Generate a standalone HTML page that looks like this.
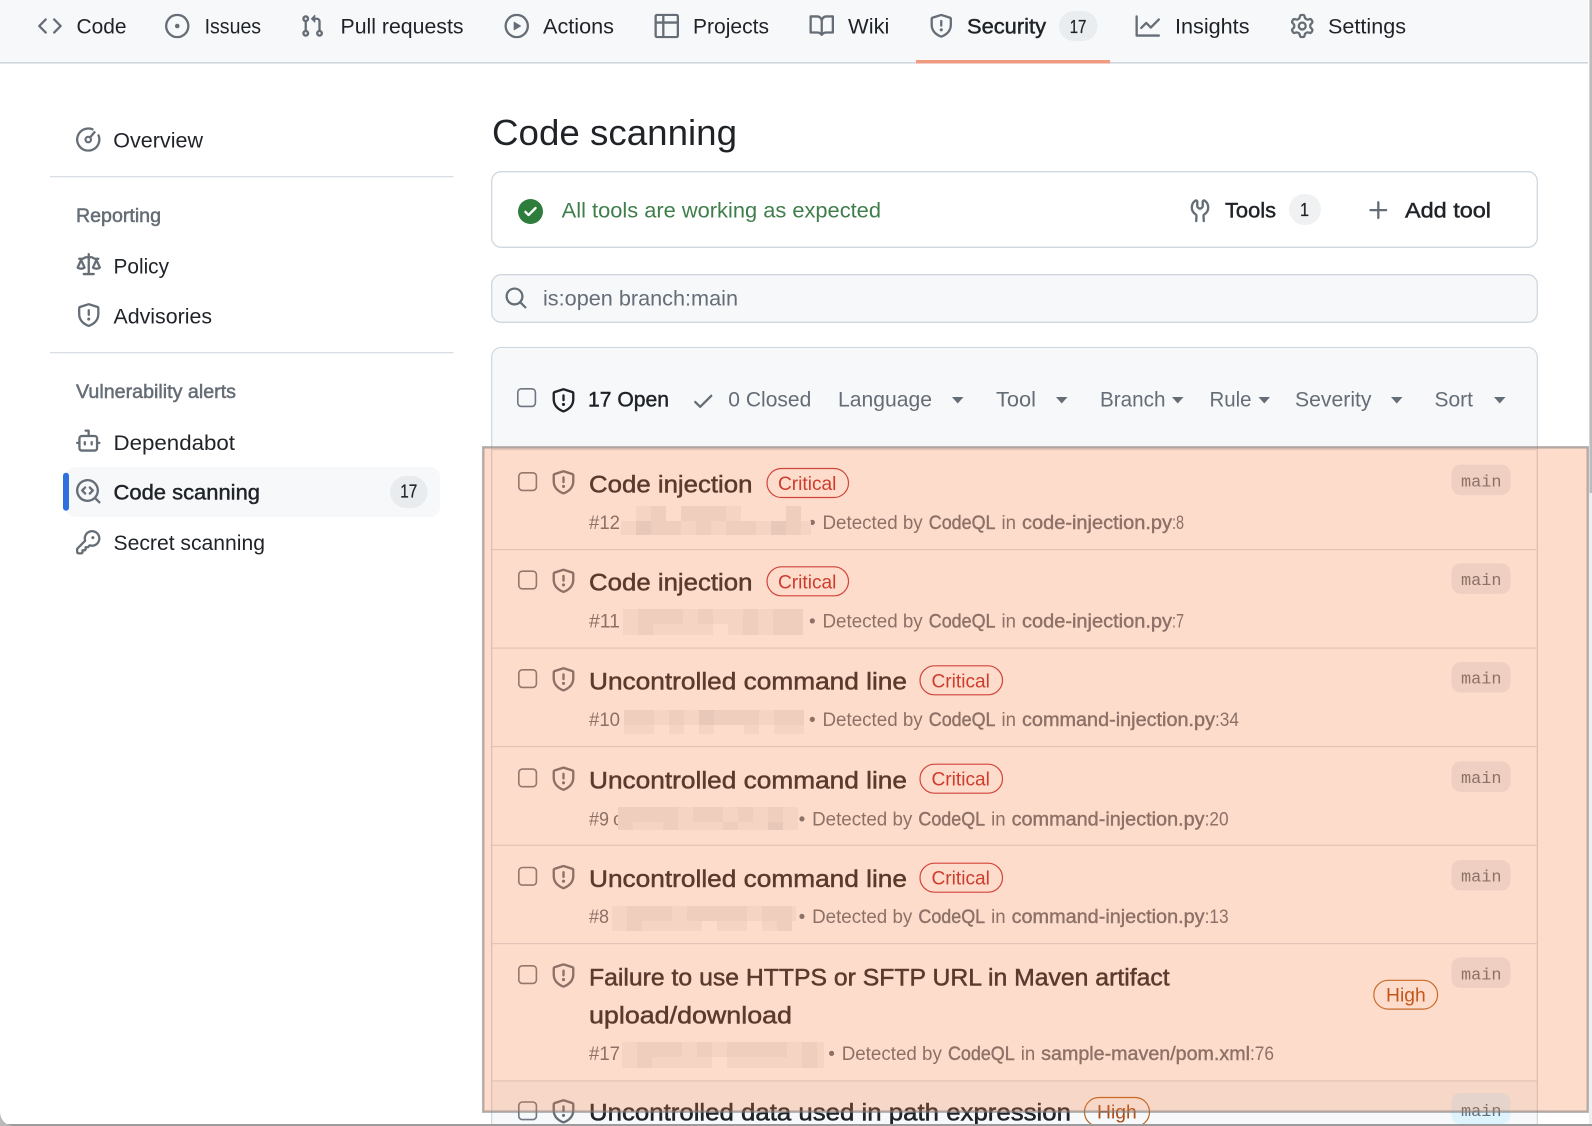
<!DOCTYPE html>
<html lang="en">
<head>
<meta charset="utf-8">
<title>Code scanning</title>
<style>
html,body{margin:0;padding:0;background:#fff;width:1592px;height:1126px;overflow:hidden}
svg{display:block;font-family:"Liberation Sans",sans-serif}
text{fill:#1f2328;font-size:21px}
.g{fill:#656d76}
.s{stroke:#1f2328;stroke-width:.45px}
.sg{fill:#656d76;stroke:#656d76;stroke-width:.5px;font-size:19.5px}
.t{font-size:24.5px;stroke:#1f2328;stroke-width:.5px}
.m{font-size:19px;fill:#656d76}
.mb{font-size:19px;fill:#656d76;stroke:#656d76;stroke-width:.4px}
.c{font-size:19.5px;fill:#bc2528}
.h{font-size:19.5px;fill:#af4a10}
.mono{font-family:"Liberation Mono",monospace;font-size:17px;fill:#656d76}
.n{font-size:18px;stroke:#1f2328;stroke-width:.3px}
.ic{fill:#656d76}
.cb{fill:none;stroke:#6e7781;stroke-width:1.6}
.bc{fill:none;stroke:#c1313b;stroke-width:1.2}
.bh{fill:none;stroke:#b66424;stroke-width:1.2}
.pill{fill:#eaeef2}
.l1{fill:#f6d4c4}.l2{fill:#efcebe}.l3{fill:#e8c8b8}
</style>
</head>
<body>
<svg xmlns="http://www.w3.org/2000/svg" width="1592" height="1126" viewBox="0 0 1592 1126">
<defs>
<symbol id="code" viewBox="0 0 16 16"><path d="m11.28 3.22 4.25 4.25a.75.75 0 0 1 0 1.06l-4.25 4.25a.749.749 0 0 1-1.275-.326.749.749 0 0 1 .215-.734L13.94 8l-3.72-3.72a.749.749 0 0 1 .326-1.275.749.749 0 0 1 .734.215Zm-6.56 0a.751.751 0 0 1 1.042.018.751.751 0 0 1 .018 1.042L2.06 8l3.72 3.72a.749.749 0 0 1-.326 1.275.749.749 0 0 1-.734-.215L.47 8.53a.75.75 0 0 1 0-1.06Z"/></symbol>
<symbol id="issue" viewBox="0 0 16 16"><path d="M8 9.5a1.5 1.5 0 1 0 0-3 1.5 1.5 0 0 0 0 3Z"/><path d="M8 0a8 8 0 1 1 0 16A8 8 0 0 1 8 0ZM1.5 8a6.5 6.5 0 1 0 13 0 6.5 6.5 0 0 0-13 0Z"/></symbol>
<symbol id="pr" viewBox="0 0 16 16"><path d="M1.5 3.25a2.25 2.25 0 1 1 3 2.122v5.256a2.251 2.251 0 1 1-1.5 0V5.372A2.25 2.25 0 0 1 1.5 3.25Zm5.677-.177L9.573.677A.25.25 0 0 1 10 .854V2.5h1A2.5 2.5 0 0 1 13.5 5v5.628a2.251 2.251 0 1 1-1.5 0V5a1 1 0 0 0-1-1h-1v1.646a.25.25 0 0 1-.427.177L7.177 3.427a.25.25 0 0 1 0-.354ZM3.75 2.5a.75.75 0 1 0 0 1.5.75.75 0 0 0 0-1.5Zm0 9.5a.75.75 0 1 0 0 1.5.75.75 0 0 0 0-1.5Zm8.25.75a.75.75 0 1 0 1.5 0 .75.75 0 0 0-1.5 0Z"/></symbol>
<symbol id="play" viewBox="0 0 16 16"><path d="M8 0a8 8 0 1 1 0 16A8 8 0 0 1 8 0ZM1.5 8a6.5 6.5 0 1 0 13 0 6.5 6.5 0 0 0-13 0Zm4.879-2.773 4.264 2.559a.25.25 0 0 1 0 .428l-4.264 2.559A.25.25 0 0 1 6 10.559V5.442a.25.25 0 0 1 .379-.215Z"/></symbol>
<symbol id="table" viewBox="0 0 16 16"><path d="M0 1.75C0 .784.784 0 1.75 0h12.5C15.216 0 16 .784 16 1.75v12.5A1.75 1.75 0 0 1 14.25 16H1.75A1.75 1.75 0 0 1 0 14.25ZM6.5 6.5v8h7.75a.25.25 0 0 0 .25-.25V6.5Zm8-1.5V1.75a.25.25 0 0 0-.25-.25H6.5V5Zm-13 1.5v7.75c0 .138.112.25.25.25H5v-8ZM5 5V1.5H1.75a.25.25 0 0 0-.25.25V5Z"/></symbol>
<symbol id="book" viewBox="0 0 16 16"><path d="M0 1.75A.75.75 0 0 1 .75 1h4.253c1.227 0 2.317.59 3 1.501A3.743 3.743 0 0 1 11.006 1h4.245a.75.75 0 0 1 .75.75v10.5a.75.75 0 0 1-.75.75h-4.507a2.25 2.25 0 0 0-1.591.659l-.622.621a.75.75 0 0 1-1.06 0l-.622-.621A2.25 2.25 0 0 0 5.258 13H.75a.75.75 0 0 1-.75-.75Zm7.251 10.324.004-5.073-.002-2.253A2.25 2.25 0 0 0 5.003 2.5H1.5v9h3.757a3.75 3.75 0 0 1 1.994.574ZM8.755 4.75l-.004 7.322a3.752 3.752 0 0 1 1.992-.572H14.5v-9h-3.495a2.25 2.25 0 0 0-2.25 2.25Z"/></symbol>
<symbol id="shield" viewBox="0 0 16 16"><path d="M7.467.133a1.748 1.748 0 0 1 1.066 0l5.25 1.68A1.75 1.75 0 0 1 15 3.48V7c0 1.566-.32 3.182-1.303 4.682-.983 1.498-2.585 2.813-5.032 3.855a1.697 1.697 0 0 1-1.33 0c-2.447-1.042-4.049-2.357-5.032-3.855C1.32 10.182 1 8.566 1 7V3.48a1.75 1.75 0 0 1 1.217-1.667Zm.61 1.429a.25.25 0 0 0-.153 0l-5.25 1.68a.25.25 0 0 0-.174.238V7c0 1.358.275 2.666 1.057 3.86.784 1.194 2.121 2.34 4.366 3.297a.196.196 0 0 0 .154 0c2.245-.956 3.582-2.104 4.366-3.298C13.225 9.666 13.5 8.36 13.5 7V3.48a.251.251 0 0 0-.174-.237l-5.25-1.68ZM8.75 4.75v3a.75.75 0 0 1-1.5 0v-3a.75.75 0 0 1 1.5 0ZM9 10.5a1 1 0 1 1-2 0 1 1 0 0 1 2 0Z"/></symbol>
<symbol id="graph" viewBox="0 0 16 16"><path d="M1.5 1.75V13.5h13.75a.75.75 0 0 1 0 1.5H.75a.75.75 0 0 1-.75-.75V1.75a.75.75 0 0 1 1.5 0Zm14.28 2.53-5.25 5.25a.75.75 0 0 1-1.06 0L7 7.06 4.28 9.78a.751.751 0 0 1-1.042-.018.751.751 0 0 1-.018-1.042l3.25-3.25a.75.75 0 0 1 1.06 0L10 7.94l4.72-4.72a.751.751 0 0 1 1.042.018.751.751 0 0 1 .018 1.042Z"/></symbol>
<symbol id="gear" viewBox="0 0 16 16"><path d="M8 0a8.2 8.2 0 0 1 .701.031C9.444.095 9.99.645 10.16 1.29l.288 1.107c.018.066.079.158.212.224.231.114.454.243.668.386.123.082.233.09.299.071l1.103-.303c.644-.176 1.392.021 1.82.63.27.385.506.792.704 1.218.315.675.111 1.422-.364 1.891l-.814.806c-.049.048-.098.147-.088.294.016.257.016.515 0 .772-.01.147.038.246.088.294l.814.806c.475.469.679 1.216.364 1.891a7.977 7.977 0 0 1-.704 1.217c-.428.61-1.176.807-1.82.63l-1.102-.302c-.067-.019-.177-.011-.3.071a5.909 5.909 0 0 1-.668.386c-.133.066-.194.158-.211.224l-.29 1.106c-.168.646-.715 1.196-1.458 1.26a8.006 8.006 0 0 1-1.402 0c-.743-.064-1.289-.614-1.458-1.26l-.289-1.106c-.018-.066-.079-.158-.212-.224a5.738 5.738 0 0 1-.668-.386c-.123-.082-.233-.09-.299-.071l-1.103.303c-.644.176-1.392-.021-1.82-.63a8.12 8.12 0 0 1-.704-1.218c-.315-.675-.111-1.422.363-1.891l.815-.806c.05-.048.098-.147.088-.294a6.214 6.214 0 0 1 0-.772c.01-.147-.038-.246-.088-.294l-.815-.806C.635 6.045.431 5.298.746 4.623a7.92 7.92 0 0 1 .704-1.217c.428-.61 1.176-.807 1.82-.63l1.102.302c.067.019.177.011.3-.071.214-.143.437-.272.668-.386.133-.066.194-.158.211-.224l.29-1.106C6.009.645 6.556.095 7.299.03 7.53.01 7.764 0 8 0Zm-.571 1.525c-.036.003-.108.036-.137.146l-.289 1.105c-.147.561-.549.967-.998 1.189-.173.086-.34.183-.5.29-.417.278-.97.423-1.529.27l-1.103-.303c-.109-.03-.175.016-.195.045-.22.312-.412.644-.573.99-.014.031-.021.11.059.19l.815.806c.411.406.562.957.53 1.456a4.709 4.709 0 0 0 0 .582c.032.499-.119 1.05-.53 1.456l-.815.806c-.081.08-.073.159-.059.19.162.346.353.677.573.989.02.03.085.076.195.046l1.102-.303c.56-.153 1.113-.008 1.53.27.161.107.328.204.501.29.447.222.85.629.997 1.189l.289 1.105c.029.109.101.143.137.146a6.6 6.6 0 0 0 1.142 0c.036-.003.108-.036.137-.146l.289-1.105c.147-.561.549-.967.998-1.189.173-.086.34-.183.5-.29.417-.278.97-.423 1.529-.27l1.103.303c.109.029.175-.016.195-.045.22-.313.411-.644.573-.99.014-.031.021-.11-.059-.19l-.815-.806c-.411-.406-.562-.957-.53-1.456a4.709 4.709 0 0 0 0-.582c-.032-.499.119-1.05.53-1.456l.815-.806c.081-.08.073-.159.059-.19a6.464 6.464 0 0 0-.573-.989c-.02-.03-.085-.076-.195-.046l-1.102.303c-.56.153-1.113.008-1.53-.27a4.44 4.44 0 0 0-.501-.29c-.447-.222-.85-.629-.997-1.189l-.289-1.105c-.029-.11-.101-.143-.137-.146a6.6 6.6 0 0 0-1.142 0ZM11 8a3 3 0 1 1-6 0 3 3 0 0 1 6 0ZM9.5 8a1.5 1.5 0 1 0-3.001.001A1.5 1.5 0 0 0 9.5 8Z"/></symbol>
<symbol id="meter" viewBox="0 0 16 16"><path d="M8 1.5a6.5 6.5 0 1 0 6.016 4.035.75.75 0 0 1 1.388-.57 8 8 0 1 1-4.37-4.37.75.75 0 0 1-.569 1.388A6.479 6.479 0 0 0 8 1.5Z"/><path d="M8 5.5a2.5 2.5 0 1 1 0 5 2.5 2.5 0 0 1 0-5Zm0 1.4a1.1 1.1 0 1 0 0 2.2 1.1 1.1 0 0 0 0-2.2Z"/><path d="M11.9 2.2l1.15 1-3.1 3.7-1.15-1z"/></symbol>
<symbol id="law" viewBox="0 0 16 16"><path d="M8.75.75V2h.985c.304 0 .603.08.867.231l1.29.736c.038.022.08.033.124.033h2.234a.75.75 0 0 1 0 1.5h-.427l2.111 4.692a.75.75 0 0 1-.154.838l-.53-.53.529.531-.001.002-.002.002-.006.006-.006.005-.01.01-.045.04c-.21.176-.441.327-.686.45C14.556 10.78 13.88 11 13 11a4.498 4.498 0 0 1-2.023-.454 3.544 3.544 0 0 1-.686-.45l-.045-.04-.016-.015-.006-.006-.004-.004v-.001a.75.75 0 0 1-.154-.838L12.178 4.5h-.162c-.305 0-.604-.079-.868-.231l-1.29-.736a.245.245 0 0 0-.124-.033H8.75V13h2.5a.75.75 0 0 1 0 1.5h-6.5a.75.75 0 0 1 0-1.5h2.5V3.5h-.984a.245.245 0 0 0-.124.033l-1.289.737c-.265.15-.564.23-.869.23h-.162l2.112 4.692a.75.75 0 0 1-.154.838l-.53-.53.529.531-.001.002-.002.002-.006.006-.016.015-.045.04c-.21.176-.441.327-.686.45C4.556 10.78 3.88 11 3 11a4.498 4.498 0 0 1-2.023-.454 3.544 3.544 0 0 1-.686-.45l-.045-.04-.016-.015-.006-.006-.004-.004v-.001a.75.75 0 0 1-.154-.838L2.178 4.5H1.75a.75.75 0 0 1 0-1.5h2.234a.249.249 0 0 0 .125-.033l1.288-.737c.265-.15.564-.23.869-.23h.984V.75a.75.75 0 0 1 1.5 0Zm2.945 8.477c.285.135.718.273 1.305.273s1.02-.138 1.305-.273L13 6.327Zm-10 0c.285.135.718.273 1.305.273s1.02-.138 1.305-.273L3 6.327Z"/></symbol>
<symbol id="dep" viewBox="0 0 16 16"><path d="M5.75 7.5a.75.75 0 0 1 .75.75v1.5a.75.75 0 0 1-1.5 0v-1.5a.75.75 0 0 1 .75-.75Zm5.25.75a.75.75 0 0 0-1.5 0v1.5a.75.75 0 0 0 1.5 0v-1.5Z"/><path d="M6.25 0h2A.75.75 0 0 1 9 .75V3.5h3.25a2.25 2.25 0 0 1 2.25 2.25V8h.75a.75.75 0 0 1 0 1.5h-.75v2.75a2.25 2.25 0 0 1-2.25 2.25h-8.5a2.25 2.25 0 0 1-2.25-2.25V9.5H.75a.75.75 0 0 1 0-1.5h.75V5.75A2.25 2.25 0 0 1 3.75 3.5H7.5v-2H6.25a.75.75 0 0 1 0-1.5ZM3 5.75v6.5c0 .414.336.75.75.75h8.5a.75.75 0 0 0 .75-.75v-6.5a.75.75 0 0 0-.75-.75h-8.5a.75.75 0 0 0-.75.75Z"/></symbol>
<symbol id="scan" viewBox="0 0 16 16"><path d="M8.47 4.97a.75.75 0 0 0 0 1.06L9.94 7.5 8.47 8.97a.75.75 0 1 0 1.06 1.06l2-2a.75.75 0 0 0 0-1.06l-2-2a.75.75 0 0 0-1.06 0ZM6.53 6.03a.75.75 0 0 0-1.06-1.06l-2 2a.75.75 0 0 0 0 1.06l2 2a.75.75 0 1 0 1.06-1.06L5.06 7.5l1.47-1.47Z"/><path d="M12.246 13.307a7.501 7.501 0 1 1 1.06-1.06l2.474 2.473a.749.749 0 0 1-.326 1.275.749.749 0 0 1-.734-.215ZM1.5 7.5a6.002 6.002 0 0 0 3.608 5.504 6.002 6.002 0 0 0 6.486-1.117.748.748 0 0 1 .292-.293A6 6 0 1 0 1.5 7.5Z"/></symbol>
<symbol id="key" viewBox="0 0 16 16"><path d="M10.5 0a5.499 5.499 0 1 1-1.288 10.848l-.932.932a.749.749 0 0 1-.53.22H7v.75a.749.749 0 0 1-.22.53l-.5.5a.749.749 0 0 1-.53.22H5v.75a.749.749 0 0 1-.22.53l-.5.5a.749.749 0 0 1-.53.22h-2A1.75 1.75 0 0 1 0 14.25v-2c0-.199.079-.389.22-.53l4.932-4.932A5.5 5.5 0 0 1 10.5 0Zm-4 5.5c-.001.431.069.86.205 1.269a.75.75 0 0 1-.181.768L1.5 12.56v1.69c0 .138.112.25.25.25h1.69l.06-.06v-1.19a.75.75 0 0 1 .75-.75h1.19l.06-.06v-1.19a.75.75 0 0 1 .75-.75h1.19l1.023-1.025a.75.75 0 0 1 .768-.18A4 4 0 1 0 6.5 5.5ZM11 6a1 1 0 1 1 0-2 1 1 0 0 1 0 2Z"/></symbol>
<symbol id="okc" viewBox="0 0 16 16"><path d="M8 16A8 8 0 1 1 8 0a8 8 0 0 1 0 16Zm3.78-9.72a.751.751 0 0 0-.018-1.042.751.751 0 0 0-1.042-.018L6.75 9.19 5.28 7.72a.751.751 0 0 0-1.042.018.751.751 0 0 0-.018 1.042l2 2a.75.75 0 0 0 1.06 0Z"/></symbol>
<symbol id="tools" viewBox="0 0 16 16"><path d="M5.433 2.304A4.492 4.492 0 0 0 3.5 6c0 1.598.832 3.002 2.09 3.802.518.328.929.923.902 1.64v.008l-.164 3.337a.75.75 0 1 1-1.498-.073l.163-3.33c.002-.085-.05-.216-.207-.316A5.996 5.996 0 0 1 2 6a5.993 5.993 0 0 1 2.567-4.92 1.482 1.482 0 0 1 1.673-.04c.462.296.76.827.76 1.423v2.82c0 .082.041.16.11.206l.75.51a.25.25 0 0 0 .28 0l.75-.51A.249.249 0 0 0 9 5.282V2.463c0-.596.298-1.127.76-1.423a1.482 1.482 0 0 1 1.673.04A5.993 5.993 0 0 1 14 6a5.996 5.996 0 0 1-2.786 5.068c-.157.1-.209.23-.207.315l.163 3.33a.752.752 0 0 1-1.094.714.75.75 0 0 1-.404-.64l-.164-3.345c-.027-.717.384-1.312.902-1.64A4.495 4.495 0 0 0 12.5 6a4.492 4.492 0 0 0-1.933-3.696c-.024-.017-.067-.067-.067.16v2.818a1.75 1.75 0 0 1-.767 1.448l-.75.51a1.75 1.75 0 0 1-1.966 0l-.75-.51A1.75 1.75 0 0 1 5.5 5.282V2.463c0-.226-.043-.176-.067-.159Z"/></symbol>
<symbol id="plus" viewBox="0 0 16 16"><path d="M7.75 2a.75.75 0 0 1 .75.75V7h4.25a.75.75 0 0 1 0 1.5H8.5v4.25a.75.75 0 0 1-1.5 0V8.5H2.75a.75.75 0 0 1 0-1.5H7V2.75A.75.75 0 0 1 7.75 2Z"/></symbol>
<symbol id="search" viewBox="0 0 16 16"><path d="M10.68 11.74a6 6 0 0 1-7.922-8.982 6 6 0 0 1 8.982 7.922l3.04 3.04a.749.749 0 0 1-.326 1.275.749.749 0 0 1-.734-.215ZM11.5 7a4.499 4.499 0 1 0-8.997 0A4.499 4.499 0 0 0 11.5 7Z"/></symbol>
<symbol id="check" viewBox="0 0 16 16"><path d="M13.78 4.22a.75.75 0 0 1 0 1.06l-7.25 7.25a.75.75 0 0 1-1.06 0L2.22 9.28a.751.751 0 0 1 .018-1.042.751.751 0 0 1 1.042-.018L6 10.94l6.72-6.72a.75.75 0 0 1 1.06 0Z"/></symbol>
</defs>

<!-- top nav -->
<rect x="0" y="0" width="1588" height="62" fill="#f6f8fa"/>
<rect x="0" y="62" width="1588" height="1.6" fill="#d0d7de"/>
<rect x="916" y="60" width="194" height="3.4" fill="#f09a80"/>
<g class="ic">
<use href="#code" x="37.7" y="13.75" width="24.5" height="24.5"/>
<use href="#issue" x="165" y="13.75" width="24.5" height="24.5"/>
<use href="#pr" x="300" y="13.75" width="24.5" height="24.5"/>
<use href="#play" x="504.5" y="13.75" width="24.5" height="24.5"/>
<use href="#table" x="654.5" y="13.75" width="24.5" height="24.5"/>
<use href="#book" x="809.5" y="13.75" width="24.5" height="24.5"/>
<use href="#shield" x="929" y="13.75" width="24.5" height="24.5"/>
<use href="#graph" x="1135.5" y="13.75" width="24.5" height="24.5"/>
<use href="#gear" x="1290" y="13.75" width="24.5" height="24.5"/>
</g>
<text x="76.5" y="33.7" textLength="50" lengthAdjust="spacingAndGlyphs">Code</text>
<text x="204.6" y="33.7" textLength="56.5" lengthAdjust="spacingAndGlyphs">Issues</text>
<text x="340.5" y="33.7" textLength="123" lengthAdjust="spacingAndGlyphs">Pull requests</text>
<text x="543" y="33.7" textLength="71" lengthAdjust="spacingAndGlyphs">Actions</text>
<text x="693" y="33.7" textLength="76" lengthAdjust="spacingAndGlyphs">Projects</text>
<text x="848" y="33.7" textLength="41.4" lengthAdjust="spacingAndGlyphs">Wiki</text>
<text x="967" y="33.7" textLength="79" lengthAdjust="spacingAndGlyphs" class="s">Security</text>
<rect x="1059" y="11" width="38.5" height="30" rx="15" fill="#eaedf0"/>
<text x="1069.7" y="33" textLength="16.7" lengthAdjust="spacingAndGlyphs" class="n" style="font-kerning:none">17</text>
<text x="1175" y="33.7" textLength="74.5" lengthAdjust="spacingAndGlyphs">Insights</text>
<text x="1328" y="33.7" textLength="78" lengthAdjust="spacingAndGlyphs">Settings</text>

<!-- sidebar -->
<g class="ic">
<use href="#meter" x="76" y="127.3" width="24.5" height="24.5"/>
<use href="#law" x="76.5" y="253" width="24.5" height="24.5"/>
<use href="#shield" x="76.5" y="303" width="24.5" height="24.5"/>
<use href="#dep" x="76" y="429.5" width="24.5" height="24.5"/>
<use href="#key" x="76" y="530" width="24.5" height="24.5"/>
</g>
<text x="113.3" y="147.7" textLength="89.7" lengthAdjust="spacingAndGlyphs">Overview</text>
<rect x="50" y="176" width="403.5" height="1.3" fill="#d8dee4"/>
<text x="76" y="222" textLength="85" lengthAdjust="spacingAndGlyphs" class="sg">Reporting</text>
<text x="113.5" y="273.3" textLength="55.5" lengthAdjust="spacingAndGlyphs">Policy</text>
<text x="113.5" y="323.5" textLength="98.5" lengthAdjust="spacingAndGlyphs">Advisories</text>
<rect x="50" y="352" width="403.5" height="1.3" fill="#d8dee4"/>
<text x="76" y="398" textLength="160" lengthAdjust="spacingAndGlyphs" class="sg">Vulnerability alerts</text>
<text x="113.5" y="450" textLength="121.5" lengthAdjust="spacingAndGlyphs">Dependabot</text>
<rect x="65" y="467" width="375" height="50" rx="10" fill="#f6f8fa"/>
<rect x="63" y="472.7" width="6" height="38" rx="3" fill="#2f6fde"/>
<use href="#scan" class="ic" x="76" y="479" width="24.5" height="24.5"/>
<text x="113.5" y="499.5" textLength="146.5" lengthAdjust="spacingAndGlyphs" class="s">Code scanning</text>
<rect x="390" y="476" width="37.5" height="32" rx="16" fill="#e9ecee"/>
<text x="400.3" y="497.5" textLength="17" lengthAdjust="spacingAndGlyphs" class="n" style="font-kerning:none">17</text>
<text x="113.5" y="550" textLength="151.5" lengthAdjust="spacingAndGlyphs">Secret scanning</text>

<!-- heading -->
<text x="492" y="145" textLength="245" lengthAdjust="spacingAndGlyphs" style="font-size:36px">Code scanning</text>

<!-- status box -->
<rect x="491.7" y="171.7" width="1045.6" height="75.6" rx="9.5" fill="#fff" stroke="#d0d7de" stroke-width="1.3"/>
<use href="#okc" x="518" y="199" width="25" height="25" fill="#2e7d3c"/>
<text x="561.7" y="217.5" textLength="319.3" lengthAdjust="spacingAndGlyphs" style="fill:#3f7d4b">All tools are working as expected</text>
<use href="#tools" class="ic" x="1187.5" y="198" width="25" height="25"/>
<text x="1225" y="217.5" textLength="51" lengthAdjust="spacingAndGlyphs" class="s">Tools</text>
<rect x="1289" y="194" width="32" height="31" rx="15.5" fill="#eff1f3"/>
<text x="1300" y="216" textLength="9" lengthAdjust="spacingAndGlyphs" class="n">1</text>
<use href="#plus" class="ic" x="1366.2" y="198" width="25" height="25"/>
<text x="1405" y="217.5" textLength="86" lengthAdjust="spacingAndGlyphs" class="s">Add tool</text>

<!-- search -->
<rect x="491.7" y="274.7" width="1045.6" height="47.6" rx="9.5" fill="#f6f8fa" stroke="#d0d7de" stroke-width="1.3"/>
<use href="#search" class="ic" x="504" y="286" width="24" height="24"/>
<text x="543" y="305.7" textLength="195" lengthAdjust="spacingAndGlyphs" class="g">is:open branch:main</text>

<!-- list -->
<path d="M491.7 1124V357a9.5 9.5 0 0 1 9.5-9.5h1026.6a9.5 9.5 0 0 1 9.5 9.5v767z" fill="#fff" stroke="#d0d7de" stroke-width="1.3"/>
<path d="M492.4 449V357a9 9 0 0 1 9-9h1026.2a9 9 0 0 1 9 9v92z" fill="#f6f8fa"/>
<rect x="492.4" y="1081" width="1044.2" height="43" fill="#f6f8fa"/>
<g fill="#d8dee4">
<rect x="492" y="449" width="1045" height="1.2"/>
<rect x="492" y="549" width="1045" height="1.2"/>
<rect x="492" y="647.5" width="1045" height="1.2"/>
<rect x="492" y="746" width="1045" height="1.2"/>
<rect x="492" y="844.7" width="1045" height="1.2"/>
<rect x="492" y="943" width="1045" height="1.2"/>
<rect x="492" y="1080.3" width="1045" height="1.2"/>
</g>

<!-- list header -->
<rect x="517.8" y="388.8" width="17.6" height="17.6" rx="3.5" class="cb"/>
<use href="#shield" x="551" y="388" width="25" height="25" fill="#1f2328"/>
<text x="588" y="406.7" textLength="81" lengthAdjust="spacingAndGlyphs" class="s">17 Open</text>
<use href="#check" class="ic" x="691" y="388.5" width="24.5" height="24.5"/>
<text x="728.3" y="406.7" textLength="83" lengthAdjust="spacingAndGlyphs" class="g">0 Closed</text>
<text x="838" y="406.7" textLength="94" lengthAdjust="spacingAndGlyphs" class="g">Language</text>
<text x="996" y="406.7" textLength="40" lengthAdjust="spacingAndGlyphs" class="g">Tool</text>
<text x="1100" y="406.7" textLength="65.5" lengthAdjust="spacingAndGlyphs" class="g">Branch</text>
<text x="1209.5" y="406.7" textLength="42" lengthAdjust="spacingAndGlyphs" class="g">Rule</text>
<text x="1295" y="406.7" textLength="76.5" lengthAdjust="spacingAndGlyphs" class="g">Severity</text>
<text x="1434.5" y="406.7" textLength="38.5" lengthAdjust="spacingAndGlyphs" class="g">Sort</text>
<g fill="#656d76">
<path d="M952 397h11.5l-5.75 6.5z"/>
<path d="M1056 397h11.5l-5.75 6.5z"/>
<path d="M1172 397h11.5l-5.75 6.5z"/>
<path d="M1258.5 397h11.5l-5.75 6.5z"/>
<path d="M1391 397h11.5l-5.75 6.5z"/>
<path d="M1494 397h11.5l-5.75 6.5z"/>
</g>

<!-- rows: checkboxes + shields -->
<g>
<rect x="518.8" y="472.8" width="17.6" height="17.6" rx="3.5" class="cb"/>
<rect x="518.8" y="571.2" width="17.6" height="17.6" rx="3.5" class="cb"/>
<rect x="518.8" y="669.8" width="17.6" height="17.6" rx="3.5" class="cb"/>
<rect x="518.8" y="769.1" width="17.6" height="17.6" rx="3.5" class="cb"/>
<rect x="518.8" y="867.5" width="17.6" height="17.6" rx="3.5" class="cb"/>
<rect x="518.8" y="965.8" width="17.6" height="17.6" rx="3.5" class="cb"/>
<rect x="518.8" y="1102" width="17.6" height="17.6" rx="3.5" class="cb"/>
</g>
<g class="ic">
<use href="#shield" x="551" y="470" width="25" height="25"/>
<use href="#shield" x="551" y="568.5" width="25" height="25"/>
<use href="#shield" x="551" y="667" width="25" height="25"/>
<use href="#shield" x="551" y="766.4" width="25" height="25"/>
<use href="#shield" x="551" y="864.8" width="25" height="25"/>
<use href="#shield" x="551" y="963.2" width="25" height="25"/>
<use href="#shield" x="551" y="1099" width="25" height="25"/>
</g>

<!-- titles -->
<text x="589" y="492.3" textLength="163.5" lengthAdjust="spacingAndGlyphs" class="t">Code injection</text>
<text x="589" y="590.7" textLength="163.5" lengthAdjust="spacingAndGlyphs" class="t">Code injection</text>
<text x="589" y="689.3" textLength="318" lengthAdjust="spacingAndGlyphs" class="t">Uncontrolled command line</text>
<text x="589" y="788.6" textLength="318" lengthAdjust="spacingAndGlyphs" class="t">Uncontrolled command line</text>
<text x="589" y="887" textLength="318" lengthAdjust="spacingAndGlyphs" class="t">Uncontrolled command line</text>
<text x="589" y="985.3" textLength="580.6" lengthAdjust="spacingAndGlyphs" class="t">Failure to use HTTPS or SFTP URL in Maven artifact</text>
<text x="589" y="1023.5" textLength="203" lengthAdjust="spacingAndGlyphs" class="t">upload/download</text>
<text x="589" y="1120.7" textLength="482" lengthAdjust="spacingAndGlyphs" class="t">Uncontrolled data used in path expression</text>

<!-- badges -->
<rect x="767" y="468.5" width="81.5" height="29" rx="14.5" class="bc"/>
<text x="778" y="490" textLength="58.4" lengthAdjust="spacingAndGlyphs" class="c">Critical</text>
<rect x="767" y="566.8" width="81.5" height="29" rx="14.5" class="bc"/>
<text x="778" y="588.3" textLength="58.4" lengthAdjust="spacingAndGlyphs" class="c">Critical</text>
<rect x="920" y="665.8" width="82.5" height="29" rx="14.5" class="bc"/>
<text x="931.5" y="687.3" textLength="58.4" lengthAdjust="spacingAndGlyphs" class="c">Critical</text>
<rect x="920" y="764.2" width="82.5" height="29" rx="14.5" class="bc"/>
<text x="931.5" y="785.7" textLength="58.4" lengthAdjust="spacingAndGlyphs" class="c">Critical</text>
<rect x="920" y="863.2" width="82.5" height="29" rx="14.5" class="bc"/>
<text x="931.5" y="884.7" textLength="58.4" lengthAdjust="spacingAndGlyphs" class="c">Critical</text>
<rect x="1373.8" y="980.3" width="63.8" height="28.8" rx="14.4" class="bh"/>
<text x="1386" y="1001.7" textLength="39.7" lengthAdjust="spacingAndGlyphs" class="h">High</text>
<rect x="1084.5" y="1097.5" width="65" height="29" rx="14.5" class="bh"/>
<text x="1097" y="1118.5" textLength="39.7" lengthAdjust="spacingAndGlyphs" class="h">High</text>

<!-- branch pills -->
<rect x="1451.5" y="464.6" width="59" height="30.5" rx="9" class="pill"/><text x="1461" y="486.3" textLength="40.5" lengthAdjust="spacingAndGlyphs" class="mono">main</text>
<rect x="1451.5" y="563.4" width="59" height="30.5" rx="9" class="pill"/><text x="1461" y="585" textLength="40.5" lengthAdjust="spacingAndGlyphs" class="mono">main</text>
<rect x="1451.5" y="662" width="59" height="30.5" rx="9" class="pill"/><text x="1461" y="683.5" textLength="40.5" lengthAdjust="spacingAndGlyphs" class="mono">main</text>
<rect x="1451.5" y="761.4" width="59" height="30.5" rx="9" class="pill"/><text x="1461" y="783" textLength="40.5" lengthAdjust="spacingAndGlyphs" class="mono">main</text>
<rect x="1451.5" y="860" width="59" height="30.5" rx="9" class="pill"/><text x="1461" y="881.5" textLength="40.5" lengthAdjust="spacingAndGlyphs" class="mono">main</text>
<rect x="1451.5" y="957.4" width="59" height="30.5" rx="9" class="pill"/><text x="1461" y="979.5" textLength="40.5" lengthAdjust="spacingAndGlyphs" class="mono">main</text>
<rect x="1451.5" y="1093" width="59" height="31" rx="9" fill="#ddf4ff"/><text x="1461" y="1116" textLength="40.5" lengthAdjust="spacingAndGlyphs" class="mono">main</text>

<!-- meta lines -->
<text x="589" y="529" textLength="31" lengthAdjust="spacingAndGlyphs" class="m">#12</text>
<text x="809" y="529" class="m">•</text><text x="822.5" y="529" textLength="100.2" lengthAdjust="spacingAndGlyphs" class="m">Detected by</text><text x="928.8" y="529" textLength="66.7" lengthAdjust="spacingAndGlyphs" class="mb">CodeQL</text><text x="1001.5" y="529" textLength="14.5" lengthAdjust="spacingAndGlyphs" class="m">in</text><text x="1022" y="529" textLength="150" lengthAdjust="spacingAndGlyphs" class="mb">code-injection.py</text><text x="1172" y="529" textLength="12" lengthAdjust="spacingAndGlyphs" class="m">:8</text>

<text x="589" y="627.4" textLength="31" lengthAdjust="spacingAndGlyphs" class="m">#11</text>
<text x="809" y="627.4" class="m">•</text><text x="822.5" y="627.4" textLength="100.2" lengthAdjust="spacingAndGlyphs" class="m">Detected by</text><text x="928.8" y="627.4" textLength="66.7" lengthAdjust="spacingAndGlyphs" class="mb">CodeQL</text><text x="1001.5" y="627.4" textLength="14.5" lengthAdjust="spacingAndGlyphs" class="m">in</text><text x="1022" y="627.4" textLength="150" lengthAdjust="spacingAndGlyphs" class="mb">code-injection.py</text><text x="1172" y="627.4" textLength="12" lengthAdjust="spacingAndGlyphs" class="m">:7</text>

<text x="589" y="726" textLength="31" lengthAdjust="spacingAndGlyphs" class="m">#10</text>
<text x="809" y="726" class="m">•</text><text x="822.5" y="726" textLength="100.2" lengthAdjust="spacingAndGlyphs" class="m">Detected by</text><text x="928.8" y="726" textLength="66.7" lengthAdjust="spacingAndGlyphs" class="mb">CodeQL</text><text x="1001.5" y="726" textLength="14.5" lengthAdjust="spacingAndGlyphs" class="m">in</text><text x="1022" y="726" textLength="193" lengthAdjust="spacingAndGlyphs" class="mb">command-injection.py</text><text x="1215" y="726" textLength="24" lengthAdjust="spacingAndGlyphs" class="m">:34</text>

<text x="589" y="825.3" textLength="20" lengthAdjust="spacingAndGlyphs" class="m">#9</text><text x="613" y="825.3" class="m">c</text>
<text x="798.6" y="825.3" class="m">•</text><text x="812.1" y="825.3" textLength="100.2" lengthAdjust="spacingAndGlyphs" class="m">Detected by</text><text x="918.4" y="825.3" textLength="66.7" lengthAdjust="spacingAndGlyphs" class="mb">CodeQL</text><text x="991.1" y="825.3" textLength="14.5" lengthAdjust="spacingAndGlyphs" class="m">in</text><text x="1011.6" y="825.3" textLength="193" lengthAdjust="spacingAndGlyphs" class="mb">command-injection.py</text><text x="1204.6" y="825.3" textLength="24" lengthAdjust="spacingAndGlyphs" class="m">:20</text>

<text x="589" y="923" textLength="20" lengthAdjust="spacingAndGlyphs" class="m">#8</text>
<text x="798.6" y="923" class="m">•</text><text x="812.1" y="923" textLength="100.2" lengthAdjust="spacingAndGlyphs" class="m">Detected by</text><text x="918.4" y="923" textLength="66.7" lengthAdjust="spacingAndGlyphs" class="mb">CodeQL</text><text x="991.1" y="923" textLength="14.5" lengthAdjust="spacingAndGlyphs" class="m">in</text><text x="1011.6" y="923" textLength="193" lengthAdjust="spacingAndGlyphs" class="mb">command-injection.py</text><text x="1204.6" y="923" textLength="24" lengthAdjust="spacingAndGlyphs" class="m">:13</text>

<text x="589" y="1060" textLength="31" lengthAdjust="spacingAndGlyphs" class="m">#17</text>
<text x="828.2" y="1060" class="m">•</text><text x="841.7" y="1060" textLength="100.2" lengthAdjust="spacingAndGlyphs" class="m">Detected by</text><text x="948" y="1060" textLength="66.7" lengthAdjust="spacingAndGlyphs" class="mb">CodeQL</text><text x="1020.7" y="1060" textLength="14.5" lengthAdjust="spacingAndGlyphs" class="m">in</text><text x="1041.2" y="1060" textLength="208.8" lengthAdjust="spacingAndGlyphs" class="mb">sample-maven/pom.xml</text><text x="1250" y="1060" textLength="24" lengthAdjust="spacingAndGlyphs" class="m">:76</text>

<!-- highlight overlay -->
<rect x="483" y="447" width="1105" height="665" fill="#fc7a3b" fill-opacity=".265"/>
<rect x="483.2" y="447.3" width="1104.6" height="664.4" fill="none" stroke="#7c7c7c" stroke-opacity=".55" stroke-width="2.5"/>

<!-- pixelated redactions -->
<path class="l1" d="M636 506h15v15h-15zM726 506h15v15h-15zM621 521h15v14h-15zM681 521h15v14h-15zM711 521h15v14h-15zM756 521h15v14h-15zM801 521h10v14h-10z"/>
<path class="l2" d="M651 506h15v15h-15zM681 506h45v15h-45zM786 506h15v15h-15zM651 521h30v14h-30zM696 521h15v14h-15zM726 521h30v14h-30zM786 521h15v14h-15z"/>
<path class="l3" d="M636 521h15v14h-15zM771 521h15v14h-15z"/>

<path class="l1" d="M623 609h15v15h-15zM683 609h15v15h-15zM713 609h30v15h-30zM758 609h15v15h-15zM623 624h15v11h-15zM653 624h60v11h-60zM728 624h15v11h-15zM758 624h15v11h-15z"/>
<path class="l2" d="M638 609h45v15h-45zM698 609h15v15h-15zM743 609h15v15h-15zM773 609h30v15h-30zM638 624h15v11h-15zM743 624h15v11h-15zM773 624h30v11h-30z"/>

<path class="l1" d="M654 710h15v15h-15zM684 710h15v15h-15zM759 710h15v15h-15zM624 725h30v9h-30zM669 725h15v9h-15zM699 725h15v9h-15zM744 725h15v9h-15zM774 725h30v9h-30z"/>
<path class="l2" d="M624 710h30v15h-30zM669 710h15v15h-15zM714 710h45v15h-45zM774 710h30v15h-30z"/>
<path class="l3" d="M699 710h15v15h-15z"/>

<path class="l1" d="M678 807h15v15h-15zM723 807h15v15h-15zM753 807h15v15h-15zM783 807h15v15h-15zM633 822h30v8h-30zM678 822h45v8h-45zM738 822h30v8h-30zM783 822h15v8h-15z"/>
<path class="l2" d="M618 807h60v15h-60zM693 807h30v15h-30zM738 807h15v15h-15zM768 807h15v15h-15zM618 822h15v8h-15zM663 822h15v8h-15zM723 822h15v8h-15z"/>
<path class="l3" d="M768 822h15v8h-15z"/>

<path class="l1" d="M612 906h15v15h-15zM672 906h15v15h-15zM747 906h15v15h-15zM792 906h4v15h-4zM612 921h15v10h-15zM642 921h60v10h-60zM717 921h30v10h-30zM762 921h15v10h-15z"/>
<path class="l2" d="M627 906h45v15h-45zM687 906h60v15h-60zM762 906h30v15h-30zM627 921h15v10h-15zM777 921h15v10h-15z"/>

<path class="l1" d="M622 1042h15v15h-15zM682 1042h15v15h-15zM712 1042h15v15h-15zM787 1042h15v15h-15zM817 1042h7v15h-7zM622 1057h15v11h-15zM652 1057h60v11h-60zM727 1057h75v11h-75zM817 1057h7v11h-7z"/>
<path class="l2" d="M637 1042h45v15h-45zM697 1042h15v15h-15zM727 1042h60v15h-60zM802 1042h15v15h-15zM637 1057h15v11h-15zM802 1057h15v11h-15z"/>

<!-- window edges -->
<rect x="1589" y="0" width="3" height="1126" fill="#efefef"/>
<rect x="1589.5" y="0" width="2.5" height="493" fill="#bcbcbc"/>
<rect x="0" y="1124" width="1592" height="2" fill="#9c9c9c"/>
<path d="M0 1112v14h14a14 14 0 0 1-14-14z" fill="#b9b9b9"/>
</svg>
</body>
</html>
